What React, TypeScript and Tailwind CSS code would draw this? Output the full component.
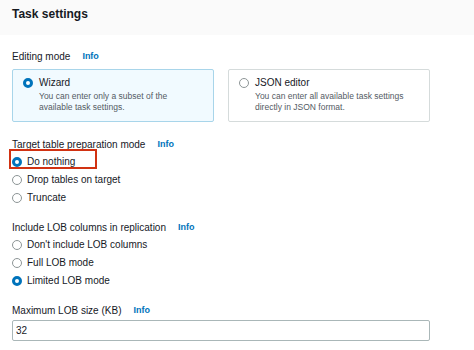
import React from "react";

function Radio({ checked }: { checked?: boolean }) {
  return checked ? (
    <span className="block w-[10px] h-[10px] rounded-full border-[3px] border-[#0073bb] bg-white shrink-0" />
  ) : (
    <span className="block w-[10px] h-[10px] rounded-full border border-[#8d9596] bg-white shrink-0" />
  );
}

function Label({ text, className = "" }: { text: string; className?: string }) {
  return (
    <div className={"flex items-center h-[17px] leading-[17px] " + className}>
      <span className="text-[10px]">{text}</span>
      <span className="ml-[12px] text-[9px] font-bold text-[#0073bb]">Info</span>
    </div>
  );
}

function Option({ text, checked, children }: { text: string; checked?: boolean; children?: React.ReactNode }) {
  return (
    <div className="relative flex items-center h-[18px] gap-[5px]">
      <Radio checked={checked} />
      <span className="text-[10px] leading-[18px]">{text}</span>
      {children}
    </div>
  );
}

function Card({ title, desc, checked }: { title: string; desc: string[]; checked?: boolean }) {
  return (
    <div
      className={
        "h-[53px] rounded-[2px] border pl-[10px] pt-[5px] " +
        (checked ? "border-[#a8d5ea] bg-[#f1faff]" : "border-[#d5dbdb] bg-white")
      }
    >
      <div className="flex gap-[6px]">
        <div className="h-[16px] flex items-center">
          <Radio checked={checked} />
        </div>
        <div>
          <div className="text-[10px] leading-[16px]">{title}</div>
          {desc.map((d) => (
            <div key={d} className="text-[8.5px] leading-[11px] text-[#545b64]">
              {d}
            </div>
          ))}
        </div>
      </div>
    </div>
  );
}

export default function App() {
  return (
    <div className="w-[474px] h-[350px] bg-white text-[#16191f] font-['Liberation_Sans',Arial,sans-serif] overflow-hidden">
      <div className="h-[35px] bg-[#fafafa] pl-3 pt-[4px]">
        <h2 className="text-[12px] font-bold leading-[20px]">Task settings</h2>
      </div>
      <div className="ml-3 w-[418px]">
        <Label text="Editing mode" className="mt-[13px] h-[16px]" />
        <div className="mt-[4px] grid grid-cols-2 gap-[14px]">
          <Card
            checked
            title="Wizard"
            desc={["You can enter only a subset of the", "available task settings."]}
          />
          <Card
            title="JSON editor"
            desc={["You can enter all available task settings", "directly in JSON format."]}
          />
        </div>

        <Label text="Target table preparation mode" className="mt-[14px]" />
        <Option text="Do nothing" checked>
          <div className="absolute left-[-3px] top-[-4px] w-[88px] h-[20px] border-2 border-[#d13212]" />
        </Option>
        <Option text="Drop tables on target" />
        <Option text="Truncate" />

        <Label text="Include LOB columns in replication" className="mt-[12px]" />
        <Option text="Don't include LOB columns" />
        <Option text="Full LOB mode" />
        <Option text="Limited LOB mode" checked />

        <Label text="Maximum LOB size (KB)" className="mt-[12px]" />
        <div className="mt-[1px] h-[21px] w-[418px] rounded-[2px] border border-[#aab7b8] pl-[3px] flex items-center text-[10px]">
          32
        </div>
      </div>
    </div>
  );
}
